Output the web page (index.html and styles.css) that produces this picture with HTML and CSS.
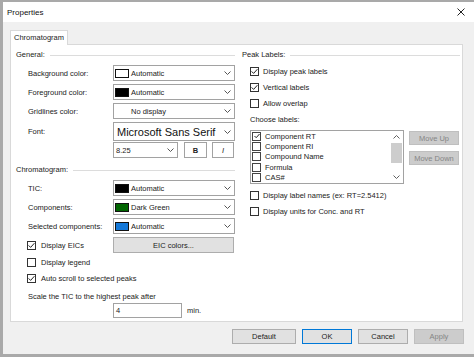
FILE: index.html
```html
<!DOCTYPE html>
<html>
<head>
<meta charset="utf-8">
<title>Properties</title>
<link rel="stylesheet" href="styles.css">
</head>
<body>
<div class="window">
  <div class="titlebar">
    <span class="title">Properties</span>
    <svg class="close" width="8" height="8" viewBox="0 0 8 8"><path d="M0.5 0.5 L7.5 7.5 M7.5 0.5 L0.5 7.5" stroke="#222" stroke-width="1" fill="none"/></svg>
  </div>
  <div class="client">
    <div class="tabs"><div class="tab">Chromatogram</div></div>
    <div class="panel">
      <div class="col">
        <div class="group-h"><span>General:</span><i class="rule"></i></div>
        <div class="frow"><span class="lbl">Background color:</span>
          <div class="combo"><span class="sw sw-white"></span><span class="ctext">Automatic</span><svg class="chev" width="7" height="4" viewBox="0 0 7 4"><polyline points="0.5,0.5 3.5,3.5 6.5,0.5" stroke="#555" fill="none"/></svg></div></div>
        <div class="frow"><span class="lbl">Foreground color:</span>
          <div class="combo"><span class="sw sw-black"></span><span class="ctext">Automatic</span><svg class="chev" width="7" height="4" viewBox="0 0 7 4"><polyline points="0.5,0.5 3.5,3.5 6.5,0.5" stroke="#555" fill="none"/></svg></div></div>
        <div class="frow"><span class="lbl">Gridlines color:</span>
          <div class="combo"><span class="sw sw-none"></span><span class="ctext">No display</span><svg class="chev" width="7" height="4" viewBox="0 0 7 4"><polyline points="0.5,0.5 3.5,3.5 6.5,0.5" stroke="#555" fill="none"/></svg></div></div>
        <div class="frow frow-font"><span class="lbl">Font:</span>
          <div class="combo combo-font"><span class="ctext">Microsoft Sans Serif</span><svg class="chev" width="7" height="4" viewBox="0 0 7 4"><polyline points="0.5,0.5 3.5,3.5 6.5,0.5" stroke="#555" fill="none"/></svg></div></div>
        <div class="frow frow-size">
          <div class="combo combo-size"><span class="ctext">8.25</span><svg class="chev" width="7" height="4" viewBox="0 0 7 4"><polyline points="0.5,0.5 3.5,3.5 6.5,0.5" stroke="#555" fill="none"/></svg></div>
          <div class="sbtn sbtn-b">B</div>
          <div class="sbtn sbtn-i">I</div>
        </div>

        <div class="group-h group-h2"><span>Chromatogram:</span><i class="rule"></i></div>
        <div class="frow"><span class="lbl">TIC:</span>
          <div class="combo"><span class="sw sw-black"></span><span class="ctext">Automatic</span><svg class="chev" width="7" height="4" viewBox="0 0 7 4"><polyline points="0.5,0.5 3.5,3.5 6.5,0.5" stroke="#555" fill="none"/></svg></div></div>
        <div class="frow"><span class="lbl">Components:</span>
          <div class="combo"><span class="sw sw-green"></span><span class="ctext">Dark Green</span><svg class="chev" width="7" height="4" viewBox="0 0 7 4"><polyline points="0.5,0.5 3.5,3.5 6.5,0.5" stroke="#555" fill="none"/></svg></div></div>
        <div class="frow"><span class="lbl">Selected components:</span>
          <div class="combo"><span class="sw sw-blue"></span><span class="ctext">Automatic</span><svg class="chev" width="7" height="4" viewBox="0 0 7 4"><polyline points="0.5,0.5 3.5,3.5 6.5,0.5" stroke="#555" fill="none"/></svg></div></div>

        <div class="crow crow-eic">
          <div class="cbl"><span class="cb"><svg width="7" height="7" viewBox="0 0 7 7"><polyline points="0.6,3.4 2.6,5.4 6.4,1.2" stroke="#222" fill="none"/></svg></span><span>Display EICs</span></div>
          <div class="btn btn-eic">EIC colors...</div>
        </div>
        <div class="crow crow-legend">
          <div class="cbl"><span class="cb"></span><span>Display legend</span></div>
        </div>
        <div class="crow">
          <div class="cbl"><span class="cb"><svg width="7" height="7" viewBox="0 0 7 7"><polyline points="0.6,3.4 2.6,5.4 6.4,1.2" stroke="#222" fill="none"/></svg></span><span>Auto scroll to selected peaks</span></div>
        </div>
        <div class="scale">Scale the TIC to the highest peak after</div>
        <div class="inrow"><div class="input">4</div><span class="unit">min.</span></div>
      </div>

      <div class="col">
        <div class="group-h"><span>Peak Labels:</span><i class="rule"></i></div>
        <div class="rrow rrow-first">
          <div class="cbl"><span class="cb"><svg width="7" height="7" viewBox="0 0 7 7"><polyline points="0.6,3.4 2.6,5.4 6.4,1.2" stroke="#222" fill="none"/></svg></span><span>Display peak labels</span></div>
        </div>
        <div class="rrow">
          <div class="cbl"><span class="cb"><svg width="7" height="7" viewBox="0 0 7 7"><polyline points="0.6,3.4 2.6,5.4 6.4,1.2" stroke="#222" fill="none"/></svg></span><span>Vertical labels</span></div>
        </div>
        <div class="rrow">
          <div class="cbl"><span class="cb"></span><span>Allow overlap</span></div>
        </div>
        <div class="choose">Choose labels:</div>
        <div class="listrow">
          <div class="listbox">
            <div class="items">
              <div class="item"><span class="lcb"><svg width="6" height="6" viewBox="0 0 6 6"><polyline points="0.5,3 2.2,4.7 5.5,1" stroke="#222" fill="none"/></svg></span><span>Component RT</span></div>
              <div class="item"><span class="lcb"></span><span>Component RI</span></div>
              <div class="item"><span class="lcb"></span><span>Compound Name</span></div>
              <div class="item"><span class="lcb"></span><span>Formula</span></div>
              <div class="item"><span class="lcb"></span><span>CAS#</span></div>
            </div>
            <div class="vscroll">
              <div class="arrow"><svg width="7" height="4" viewBox="0 0 7 4"><polyline points="0.5,3.5 3.5,0.5 6.5,3.5" stroke="#606060" fill="none"/></svg></div>
              <div class="track"><div class="thumb"></div></div>
              <div class="arrow"><svg width="7" height="4" viewBox="0 0 7 4"><polyline points="0.5,0.5 3.5,3.5 6.5,0.5" stroke="#606060" fill="none"/></svg></div>
            </div>
          </div>
          <div class="movebtns">
            <div class="btn btn-dis btn-up">Move Up</div>
            <div class="btn btn-dis btn-down">Move Down</div>
          </div>
        </div>
        <div class="rrow rrow-names">
          <div class="cbl"><span class="cb"></span><span>Display label names (ex: RT=2.5412)</span></div>
        </div>
        <div class="rrow rrow-units">
          <div class="cbl"><span class="cb"></span><span>Display units for Conc. and RT</span></div>
        </div>
      </div>
    </div>
    <div class="footer">
      <div class="btn fbtn fbtn-wide">Default</div>
      <div class="btn fbtn fbtn-ok">OK</div>
      <div class="btn fbtn">Cancel</div>
      <div class="btn fbtn btn-dis">Apply</div>
    </div>
  </div>
</div>
</body>
</html>
```

FILE: styles.css
```css
* { box-sizing: border-box; }
html, body { margin: 0; padding: 0; }
body {
  width: 474px;
  height: 357px;
  overflow: hidden;
  background: #a9a9a9;
  font-family: "Liberation Sans", Arial, sans-serif;
  font-size: 7.5px;
  color: #222;
}
.window {
  margin: 2px 0 0 3px;
  width: 471px;
  height: 352px;
  background: #f0f0f0;
  display: flex;
  flex-direction: column;
}
.titlebar {
  height: 20px;
  flex: none;
  background: #fff;
  display: flex;
  align-items: center;
  justify-content: space-between;
  padding: 0 9px 0 4px;
  font-size: 8px;
  color: #111;
}
.close { display: block; }
.client {
  flex: 1;
  padding: 8px 11px 0 7px;
  display: flex;
  flex-direction: column;
}
.tabs { height: 14px; display: flex; flex: none; }
.tab {
  position: relative;
  z-index: 1;
  width: 58px;
  height: 15px;
  background: #fff;
  border: 1px solid #d9d9d9;
  border-bottom: none;
  text-align: center;
  line-height: 13px;
}
.panel {
  height: 278px;
  flex: none;
  background: #fff;
  border: 1px solid #d9d9d9;
  display: grid;
  grid-template-columns: 219px 218px;
  column-gap: 7px;
  align-items: start;
  padding: 5px 0 0 5px;
}
.col { display: flex; flex-direction: column; }
.group-h {
  height: 10px;
  line-height: 10px;
  display: flex;
  align-items: center;
  margin-bottom: 2px;
}
.group-h2 { margin-top: 7px; }
.rule { flex: 1; height: 1px; background: #dcdcdc; margin-left: 5px; }

.frow {
  display: flex;
  align-items: center;
  height: 16px;
  margin-top: 3px;
  padding-left: 12px;
}
.frow-font { height: 19px; }
.frow-size { margin-top: 1px; padding-left: 97px; }
.lbl { width: 85px; flex: none; white-space: nowrap; }
.combo {
  width: 122px;
  height: 100%;
  background: #fff;
  border: 1px solid #a2a2a2;
  display: flex;
  align-items: center;
  padding-left: 1px;
}
.ctext { flex: 1; white-space: nowrap; }
.chev { flex: none; margin-right: 3px; display: block; }
.combo-font { padding-left: 3px; font-size: 11px; color: #111; }
.combo-size { width: 65px; padding-left: 2px; }
.sw { width: 14px; height: 9px; flex: none; margin-right: 2px; border: 1px solid #111; }
.sw-white { background: #fff; }
.sw-black { background: #000; }
.sw-green { background: #006400; }
.sw-blue { background: #1478d8; }
.sw-none { border-color: transparent; }
.sbtn {
  height: 100%;
  background: #fff;
  border: 1px solid #a2a2a2;
  display: flex;
  align-items: center;
  justify-content: center;
}
.sbtn-b { width: 23px; margin-left: 6px; font-weight: bold; }
.sbtn-i { width: 22px; margin-left: 5px; font-style: italic; }

.crow {
  display: flex;
  align-items: center;
  height: 16px;
  padding-left: 11px;
}
.crow-eic { margin-top: 3px; }
.crow-legend { margin-top: 1px; }
.cbl { display: flex; align-items: center; width: 86px; flex: none; white-space: nowrap; }
.cb {
  width: 9px;
  height: 9px;
  flex: none;
  border: 1px solid #333;
  background: #fff;
  margin-right: 5px;
  display: flex;
  align-items: center;
  justify-content: center;
}
.cb svg { display: block; }
.btn {
  background: #e1e1e1;
  border: 1px solid #adadad;
  display: flex;
  align-items: center;
  justify-content: center;
  white-space: nowrap;
}
.btn-eic { width: 121px; height: 16px; }
.btn-dis { background: #cccccc; border-color: #bfbfbf; color: #858585; }
.scale { margin-top: 6px; height: 10px; line-height: 10px; padding-left: 12px; }
.inrow { display: flex; align-items: center; margin-top: 1px; padding-left: 97px; height: 15px; }
.input {
  width: 69px;
  height: 15px;
  background: #fff;
  border: 1px solid #a2a2a2;
  padding-left: 2px;
  display: flex;
  align-items: center;
}
.unit { margin-left: 5px; }

.rrow {
  display: flex;
  align-items: center;
  height: 16px;
  padding-left: 8px;
}
.rrow .cbl { width: auto; }
.rrow .cb { margin-right: 4px; }
.rrow-first { margin-top: 1px; }
.rrow-names { margin-top: 3px; }
.choose { margin-top: 4px; height: 10px; line-height: 10px; padding-left: 8px; }
.listrow { display: flex; margin-top: 5px; padding-left: 8px; }
.listbox {
  width: 154px;
  height: 54px;
  border: 1px solid #a2a2a2;
  background: #fff;
  display: flex;
}
.items { flex: 1; }
.item {
  height: 10.4px;
  display: flex;
  align-items: center;
  padding-left: 1px;
  white-space: nowrap;
}
.lcb {
  width: 9px;
  height: 9px;
  flex: none;
  border: 1px solid #444;
  margin-right: 4px;
  display: flex;
  align-items: center;
  justify-content: center;
}
.lcb svg { display: block; }
.vscroll { width: 13px; display: flex; flex-direction: column; background: #fff; }
.arrow { height: 12px; display: flex; align-items: center; justify-content: center; }
.track { flex: 1; padding: 0 1px; }
.thumb { height: 20px; background: #cdcdcd; }
.movebtns { margin-left: 5px; display: flex; flex-direction: column; }
.btn-up { width: 50px; height: 14px; margin-top: 1px; }
.btn-down { width: 50px; height: 14px; margin-top: 6px; }

.footer {
  display: flex;
  justify-content: flex-end;
  gap: 6px;
  margin-top: 7px;
  margin-right: -1px;
}
.fbtn { width: 50px; height: 15px; }
.fbtn-wide { width: 64px; }
.fbtn-ok { border-color: #0078d7; }
```
